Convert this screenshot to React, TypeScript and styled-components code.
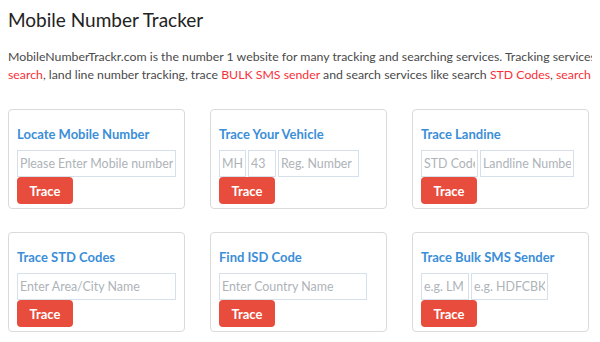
import styled, { createGlobalStyle } from 'styled-components';

const GlobalStyle = createGlobalStyle`
  body {
    margin: 8px;
    font-family: Lato, 'Open Sans', sans-serif;
    color: #444;
    background: #fff;
    overflow: hidden;
  }
`;

type Field = { placeholder: string; width: number };

const cards: { title: string; fields: Field[] }[] = [
  { title: 'Locate Mobile Number', fields: [{ placeholder: 'Please Enter Mobile number', width: 159 }] },
  {
    title: 'Trace Your Vehicle',
    fields: [
      { placeholder: 'MH', width: 27 },
      { placeholder: '43', width: 28 },
      { placeholder: 'Reg. Number', width: 81 },
    ],
  },
  {
    title: 'Trace Landine',
    fields: [
      { placeholder: 'STD Code', width: 57 },
      { placeholder: 'Landline Number', width: 94 },
    ],
  },
  { title: 'Trace STD Codes', fields: [{ placeholder: 'Enter Area/City Name', width: 159 }] },
  { title: 'Find ISD Code', fields: [{ placeholder: 'Enter Country Name', width: 148 }] },
  {
    title: 'Trace Bulk SMS Sender',
    fields: [
      { placeholder: 'e.g. LM', width: 48 },
      { placeholder: 'e.g. HDFCBK', width: 77 },
    ],
  },
];

export default function App() {
  return (
    <>
      <GlobalStyle />
      <TitleSt>Mobile Number Tracker</TitleSt>
      <IntroSt>
        <LineSt>
          MobileNumberTrackr.com is the number 1 website for many tracking and searching services. Tracking services
          like <RedSt>mobile number</RedSt>
        </LineSt>
        <LineSt>
          <RedSt>search</RedSt>, land line number tracking, trace <RedSt>BULK SMS sender</RedSt> and search services
          like search <RedSt>STD Codes</RedSt>, <RedSt>search ISD Codes</RedSt>
        </LineSt>
      </IntroSt>
      <GridSt>
        {cards.map((card) => (
          <CardSt key={card.title}>
            <CardTitleSt>{card.title}</CardTitleSt>
            <FieldRowSt>
              {card.fields.map((f) => (
                <InputSt key={f.placeholder} placeholder={f.placeholder} $w={f.width} />
              ))}
            </FieldRowSt>
            <ButtonSt>Trace</ButtonSt>
          </CardSt>
        ))}
      </GridSt>
    </>
  );
}

const TitleSt = styled.h1`
  margin: 0;
  font-size: 19px;
  line-height: 24px;
  font-weight: 400;
  color: #222;
`;
const IntroSt = styled.div`
  margin-top: 16px;
  font-size: 12.3px;
  line-height: 18px;
  color: #4a4a4a;
`;
const LineSt = styled.div`
  white-space: nowrap;
`;
const RedSt = styled.span`
  color: #f7303a;
`;
const GridSt = styled.div`
  margin-top: 25px;
  display: grid;
  grid-template-columns: repeat(3, 177px);
  column-gap: 25px;
  row-gap: 23px;
`;
const CardSt = styled.div`
  border: 1px solid #dadada;
  border-radius: 4px;
  padding: 15px 8px 4px 8px;
  height: 100px;
  box-sizing: border-box;
`;
const CardTitleSt = styled.div`
  font-size: 13px;
  line-height: 18px;
  font-weight: 700;
  color: #3b8ed8;
  margin-bottom: 7px;
`;
const FieldRowSt = styled.div`
  display: flex;
  gap: 2px;
`;
const InputSt = styled.input<{ $w: number }>`
  width: ${(p) => p.$w}px;
  height: 27px;
  box-sizing: border-box;
  border: 1px solid #d5e0eb;
  padding: 0 2px;
  font-family: Lato, sans-serif;
  font-size: 12.4px;
  color: #555;
  outline: none;
  &::placeholder {
    color: #aeb3b8;
  }
`;
const ButtonSt = styled.button`
  display: block;
  width: 56px;
  height: 27px;
  border: none;
  border-radius: 4px;
  background: #e74c3c;
  color: #fff;
  font-family: Lato, sans-serif;
  font-size: 13px;
  font-weight: 700;
  padding: 0;
`;
